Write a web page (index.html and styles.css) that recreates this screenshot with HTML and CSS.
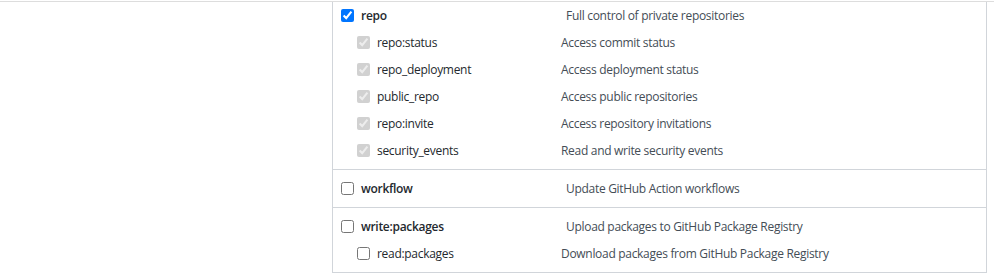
FILE: index.html
```html
<!DOCTYPE html>
<html lang="en">
<head>
    <meta charset="UTF-8">
    <title>Token scopes</title>
    <link rel="stylesheet" href="styles.css">
</head>
<body>
    <div class="top-rule"></div>
    <div class="scopes">
        <div class="scope-group">
            <label class="scope-row">
                <span class="scope-name"><input type="checkbox" checked><strong>repo</strong></span>
                <span class="scope-desc">Full control of private repositories</span>
            </label>
            <label class="scope-row child">
                <span class="scope-name"><input type="checkbox" checked disabled>repo:status</span>
                <span class="scope-desc">Access commit status</span>
            </label>
            <label class="scope-row child">
                <span class="scope-name"><input type="checkbox" checked disabled>repo_deployment</span>
                <span class="scope-desc">Access deployment status</span>
            </label>
            <label class="scope-row child">
                <span class="scope-name"><input type="checkbox" checked disabled>public_repo</span>
                <span class="scope-desc">Access public repositories</span>
            </label>
            <label class="scope-row child">
                <span class="scope-name"><input type="checkbox" checked disabled>repo:invite</span>
                <span class="scope-desc">Access repository invitations</span>
            </label>
            <label class="scope-row child">
                <span class="scope-name"><input type="checkbox" checked disabled>security_events</span>
                <span class="scope-desc">Read and write security events</span>
            </label>
        </div>
        <div class="scope-group">
            <label class="scope-row">
                <span class="scope-name"><input type="checkbox"><strong>workflow</strong></span>
                <span class="scope-desc">Update GitHub Action workflows</span>
            </label>
        </div>
        <div class="scope-group">
            <label class="scope-row">
                <span class="scope-name"><input type="checkbox"><strong>write:packages</strong></span>
                <span class="scope-desc">Upload packages to GitHub Package Registry</span>
            </label>
            <label class="scope-row child">
                <span class="scope-name"><input type="checkbox">read:packages</span>
                <span class="scope-desc">Download packages from GitHub Package Registry</span>
            </label>
        </div>
    </div>
</body>
</html>
```

FILE: styles.css
```css
body {
    margin: 0;
    padding-top: 1px;
    font-family: "Open Sans", "Noto Sans", sans-serif;
    font-size: 12px;
    letter-spacing: -0.3px;
    color: #24292e;
    background: #fff;
}
.top-rule {
    height: 1px;
    background: #dddddd;
}
.scopes {
    margin-left: 332px;
    width: 653px;
    border-left: 1px solid #d1d5da;
    border-right: 1px solid #d1d5da;
}
.scope-group {
    padding: 5px 0;
    border-bottom: 1px solid #d1d5da;
}
.scope-group:first-child {
    padding-top: 0;
}
.scope-row {
    display: flex;
    align-items: center;
    height: 27px;
    padding-left: 8px;
}
.scope-row.child {
    padding-left: 24px;
}
.scope-name {
    display: flex;
    align-items: center;
    width: 225px;
}
.scope-row.child .scope-name {
    width: 204px;
}
.scope-name input {
    width: 13px;
    height: 13px;
    margin: 0 7px 0 0;
}
.scope-name strong {
    font-weight: 600;
}
.scope-desc {
    color: #444d56;
}
```
